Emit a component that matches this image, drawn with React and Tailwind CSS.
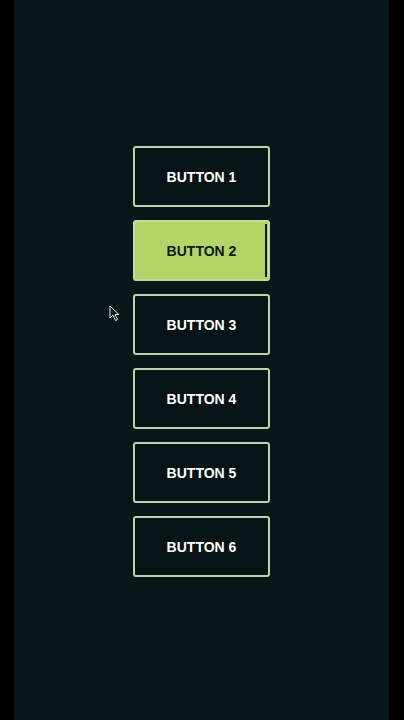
export default function App() {
  const buttons = [1, 2, 3, 4, 5, 6];
  return (
    <div className="w-[404px] h-[720px] bg-black flex" style={{ fontFamily: '"Liberation Sans", Arial, sans-serif' }}>
      <div className="ml-[14px] w-[375px] h-full bg-[#07171a] relative">
        <div className="flex flex-col items-center gap-[13px] pt-[146px] pr-[1px]">
          {buttons.map((n) =>
            n === 2 ? (
              <div
                key={n}
                className="w-[137px] h-[61px] rounded-[3px] border-2 border-[#c3dc9a] bg-[#b4d468] flex items-center justify-center relative pt-[1px] pl-[1px]"
              >
                <div className="absolute right-[1px] top-[2px] bottom-[2px] w-[2px] bg-[#0c1a12]" />
                <span className="text-[14px] font-bold text-[#0d1a10]">BUTTON {n}</span>
              </div>
            ) : (
              <div
                key={n}
                className="w-[137px] h-[61px] rounded-[3px] border-2 border-[#bfd0ab] bg-[#061417] flex items-center justify-center pt-[2px] pl-[1px]"
              >
                <span className="text-[14px] font-bold text-white">BUTTON {n}</span>
              </div>
            )
          )}
        </div>
        <svg className="absolute left-[95px] top-[305px]" width="12" height="17" viewBox="0 0 12 17">
          <path d="M1 1 L1 13 L4 10 L6.5 15.5 L8.5 14.5 L6 9.5 L10 9.5 Z" fill="#0b1a1c" stroke="#e8efe8" strokeWidth="1" strokeLinejoin="round" />
        </svg>
      </div>
    </div>
  );
}
